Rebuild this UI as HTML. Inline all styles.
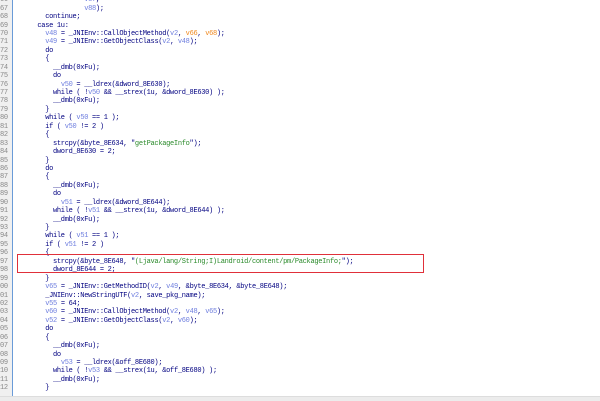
<!DOCTYPE html>
<html><head><meta charset="utf-8"><style>
html,body{margin:0;padding:0;width:600px;height:400px;overflow:hidden;background:#fff;}
#g{position:absolute;left:0;top:0;width:12px;height:396px;background:#f0f0f0;border-right:1px solid #6a9bd8;}
pre{margin:0;position:absolute;top:-3.8px;font-family:"Liberation Mono",monospace;font-size:7px;letter-spacing:-0.3px;line-height:8.43px;}
#n{left:0;color:#888;width:12px;overflow:hidden;}
#c{left:14px;color:#000080;}
.v{color:#6f7fdf}.o{color:#f08a20}.s{color:#2a8a2a}
#box{position:absolute;left:17px;top:254px;width:407px;height:19px;border:1.5px solid #e0303a;box-sizing:border-box;}
#sb{position:absolute;left:0;top:396px;width:600px;height:4px;background:#ececec;border-top:1px solid #ddd;}
</style></head><body>
<div id="g"></div>
<pre id="n">66
67
68
69
70
71
72
73
74
75
76
77
78
79
80
81
82
83
84
85
86
87
88
89
90
91
92
93
94
95
96
97
98
99
00
01
02
03
04
05
06
07
08
09
10
11
12</pre>
<pre id="c">                  <span class="v">v87</span>,
                  <span class="v">v88</span>);
        continue;
      case 1u:
        <span class="v">v48</span> = _JNIEnv::CallObjectMethod(<span class="v">v2</span>, <span class="o">v66</span>, <span class="o">v68</span>);
        <span class="v">v49</span> = _JNIEnv::GetObjectClass(<span class="v">v2</span>, <span class="v">v48</span>);
        do
        {
          __dmb(0xFu);
          do
            <span class="v">v50</span> = __ldrex(&amp;dword_8E630);
          while ( !<span class="v">v50</span> &amp;&amp; __strex(1u, &amp;dword_8E630) );
          __dmb(0xFu);
        }
        while ( <span class="v">v50</span> == 1 );
        if ( <span class="v">v50</span> != 2 )
        {
          strcpy(&amp;byte_8E634, "<span class="s">getPackageInfo</span>");
          dword_8E630 = 2;
        }
        do
        {
          __dmb(0xFu);
          do
            <span class="v">v51</span> = __ldrex(&amp;dword_8E644);
          while ( !<span class="v">v51</span> &amp;&amp; __strex(1u, &amp;dword_8E644) );
          __dmb(0xFu);
        }
        while ( <span class="v">v51</span> == 1 );
        if ( <span class="v">v51</span> != 2 )
        {
          strcpy(&amp;byte_8E648, "<span class="s">(Ljava/lang/String;I)Landroid/content/pm/PackageInfo;</span>");
          dword_8E644 = 2;
        }
        <span class="v">v65</span> = _JNIEnv::GetMethodID(<span class="v">v2</span>, <span class="v">v49</span>, &amp;byte_8E634, &amp;byte_8E648);
        _JNIEnv::NewStringUTF(<span class="v">v2</span>, save_pkg_name);
        <span class="v">v55</span> = 64;
        <span class="v">v60</span> = _JNIEnv::CallObjectMethod(<span class="v">v2</span>, <span class="v">v48</span>, <span class="v">v65</span>);
        <span class="v">v52</span> = _JNIEnv::GetObjectClass(<span class="v">v2</span>, <span class="v">v60</span>);
        do
        {
          __dmb(0xFu);
          do
            <span class="v">v53</span> = __ldrex(&amp;off_8E680);
          while ( !<span class="v">v53</span> &amp;&amp; __strex(1u, &amp;off_8E680) );
          __dmb(0xFu);
        }</pre>
<div id="box"></div>
<div id="sb"></div>
</body></html>
